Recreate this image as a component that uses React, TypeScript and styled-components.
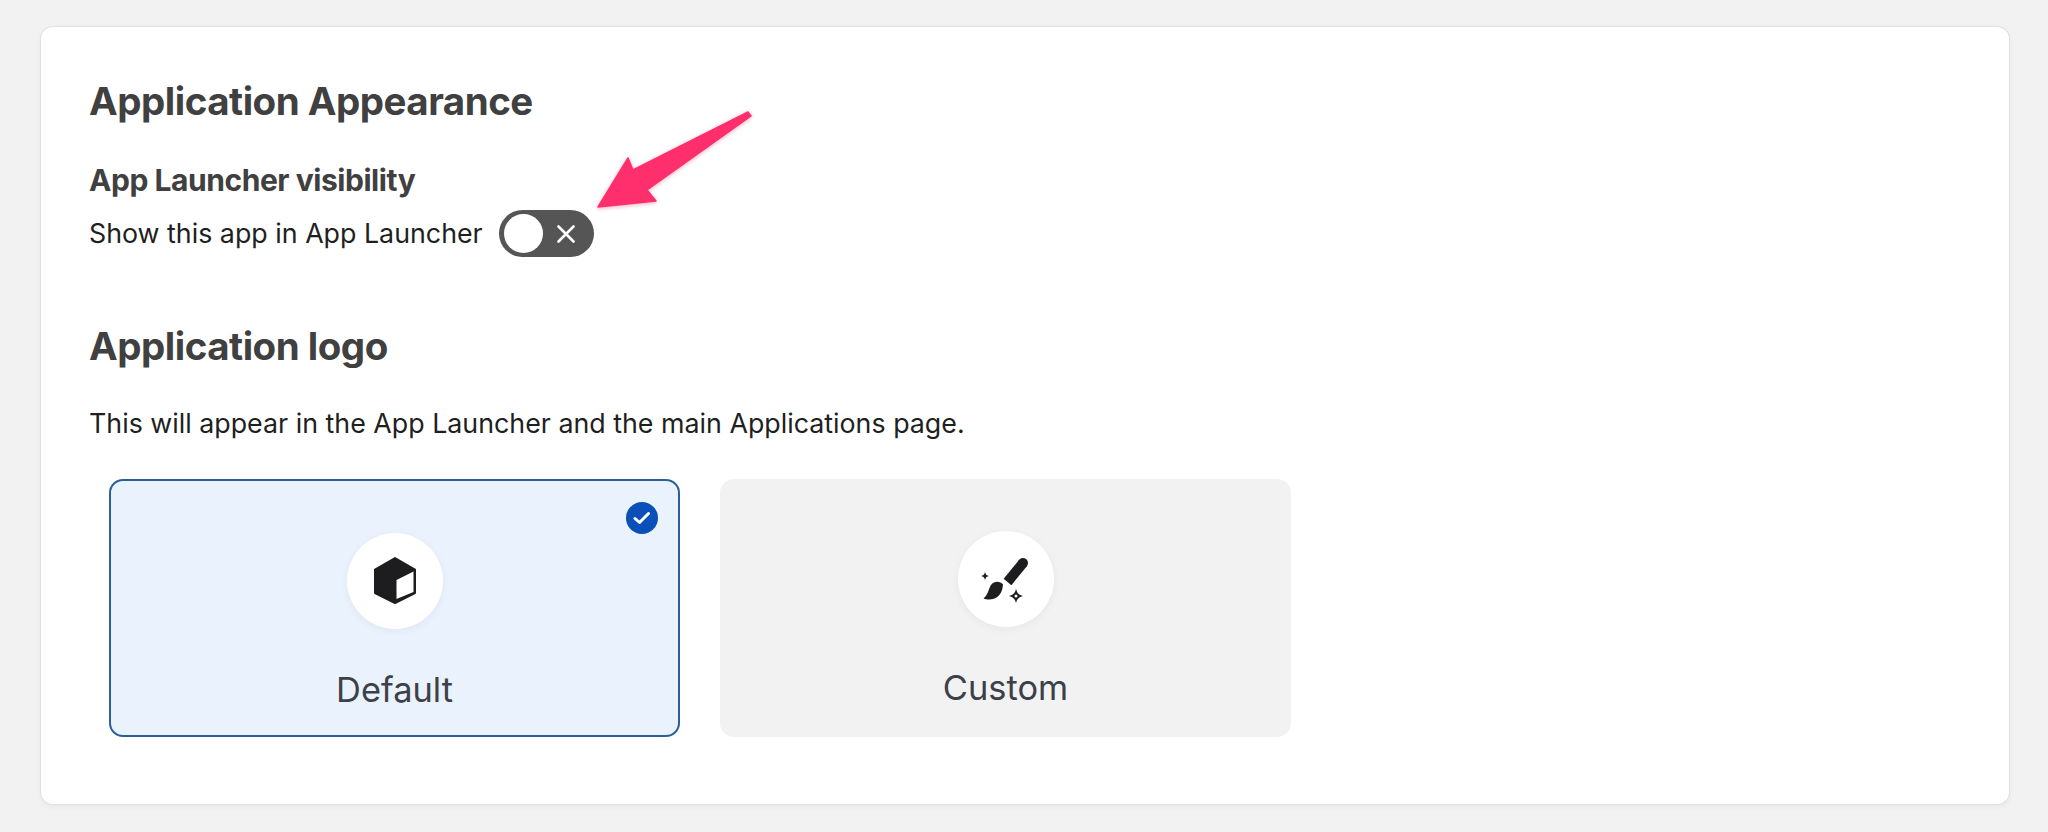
import React from "react";
import styled, { createGlobalStyle } from "styled-components";

const GlobalStyle = createGlobalStyle`
  html, body {
    margin: 0;
    padding: 0;
    background: #f2f2f2;
  }
  * {
    box-sizing: border-box;
  }
`;

function CubeIcon() {
  return (
    <svg width="48" height="48" viewBox="0 0 48 48">
      <path
        d="M24 1 L44 12.5 V36 L24 46 L4 36 V12.5 Z"
        fill="#1d1d1f"
        stroke="#1d1d1f"
        strokeWidth="2"
        strokeLinejoin="round"
      />
      <path d="M25.5 23 L42.5 14.5 V35 L25.5 42 Z" fill="#fff" />
    </svg>
  );
}

function BrushIcon() {
  return (
    <svg width="48" height="48" viewBox="0 0 48 48" fill="#1d1d1f" overflow="visible">
      <path d="M41 8 L25.5 27" stroke="#1d1d1f" strokeWidth="10" />
      <circle cx="41" cy="8" r="5" />
      <path d="M21 29.5 C18 25.5 12 26 9 30 C6.5 34 6 40 1.5 43.5 C8 46 20 45 21 29.5 Z" />
      <path d="M3 17 C3.5 19.5 4.5 20.5 7 21 C4.5 21.5 3.5 22.5 3 25 C2.5 22.5 1.5 21.5 -1 21 C1.5 20.5 2.5 19.5 3 17 Z" />
      <path d="M34 34 C35 38 37 40 41 41 C37 42 35 44 34 48 C33 44 31 42 27 41 C31 40 33 38 34 34 Z" />
      <circle cx="34" cy="41" r="1.5" fill="#fff" />
    </svg>
  );
}

function App() {
  return (
    <>
      <GlobalStyle />
      <Page>
        <Panel>
          <Heading>Application Appearance</Heading>
          <SubHeading>App Launcher visibility</SubHeading>
          <ToggleRow>
            <Body>Show this app in App Launcher</Body>
            <Toggle>
              <Knob />
              <svg width="18" height="18" viewBox="0 0 18 18">
                <path d="M1.5 1.5 L16.5 16.5 M16.5 1.5 L1.5 16.5" stroke="#fff" strokeWidth="2.6" strokeLinecap="round" />
              </svg>
            </Toggle>
          </ToggleRow>
          <LogoHeading>Application logo</LogoHeading>
          <Description>This will appear in the App Launcher and the main Applications page.</Description>
          <Options>
            <Option $selected>
              <IconCircle>
                <CubeIcon />
              </IconCircle>
              <OptionLabel>Default</OptionLabel>
              <CheckBadge>
                <svg width="18" height="14" viewBox="0 0 18 14">
                  <path d="M2 7.5 L6.5 11.5 L15.5 2.5" fill="none" stroke="#fff" strokeWidth="3" strokeLinecap="round" strokeLinejoin="round" />
                </svg>
              </CheckBadge>
            </Option>
            <Option>
              <IconCircle>
                <BrushIcon />
              </IconCircle>
              <OptionLabel>Custom</OptionLabel>
            </Option>
          </Options>
          <Arrow width="170" height="110" viewBox="0 0 170 110">
            <path d="M2 103 L32 54 L37 66 L152 8 L155 12 L51 86 L60 97 Z" fill="#fe2f6c" stroke="#fe2f6c" strokeWidth="1.5" strokeLinejoin="round" />
          </Arrow>
        </Panel>
      </Page>
    </>
  );
}

const Page = styled.div`
  height: 832px;
  padding: 27px 39px 28px 41px;
  font-family: Inter, "Noto Sans", sans-serif;
`;

const Panel = styled.div`
  position: relative;
  height: 777px;
  padding: 52px 48px 0;
  background: #fff;
  border-radius: 12px;
  box-shadow: 0 0 0 1px #e0e0e0, 0 2px 6px rgba(0, 0, 0, 0.06);
`;

const Heading = styled.h2`
  margin: 0;
  font-size: 38.5px;
  line-height: 44px;
  font-weight: 700;
  letter-spacing: -0.5px;
  color: #404040;
`;

const LogoHeading = styled(Heading)`
  margin-top: 67px;
`;

const SubHeading = styled.h3`
  margin: 39px 0 0;
  font-size: 30px;
  line-height: 36px;
  font-weight: 700;
  letter-spacing: -0.45px;
  color: #404040;
`;

const ToggleRow = styled.div`
  display: flex;
  align-items: center;
  gap: 16px;
  margin-top: 12px;
`;

const Body = styled.span`
  padding-bottom: 2px;
  font-size: 26.8px;
  line-height: 36px;
  color: #1f1f1f;
`;

const Toggle = styled.div`
  display: flex;
  align-items: center;
  justify-content: space-between;
  width: 95px;
  height: 47px;
  padding: 0 19px 0 5px;
  background: #555;
  border-radius: 24px;
`;

const Knob = styled.div`
  width: 39px;
  height: 39px;
  background: #fff;
  border-radius: 50%;
`;

const Description = styled.p`
  margin: 37px 0 0;
  font-size: 26.8px;
  line-height: 36px;
  color: #1f1f1f;
`;

const Options = styled.div`
  display: flex;
  gap: 40px;
  margin: 38px 0 0 20px;
`;

const Option = styled.div<{ $selected?: boolean }>`
  position: relative;
  display: flex;
  flex-direction: column;
  align-items: center;
  width: 571px;
  height: 258px;
  padding-top: 52px;
  border-radius: 14px;
  background: ${(props) => (props.$selected ? "#eaf2fd" : "#f2f2f2")};
  border: ${(props) => (props.$selected ? "2px solid #2c5e9a" : "none")};
`;

const IconCircle = styled.div`
  display: flex;
  align-items: center;
  justify-content: center;
  width: 96px;
  height: 96px;
  background: #fff;
  border-radius: 50%;
  box-shadow: 0 2px 8px rgba(0, 0, 0, 0.05);
`;

const OptionLabel = styled.div`
  margin-top: 40px;
  font-size: 34.4px;
  line-height: 42px;
  color: #3c4049;
`;

const CheckBadge = styled.div`
  position: absolute;
  top: 21px;
  right: 20px;
  display: flex;
  align-items: center;
  justify-content: center;
  width: 32px;
  height: 32px;
  background: #0b50b8;
  border-radius: 50%;
`;

const Arrow = styled.svg`
  position: absolute;
  left: 555px;
  top: 77px;
  filter: drop-shadow(0 1px 2px rgba(180, 30, 80, 0.35));
`;

export default App;
